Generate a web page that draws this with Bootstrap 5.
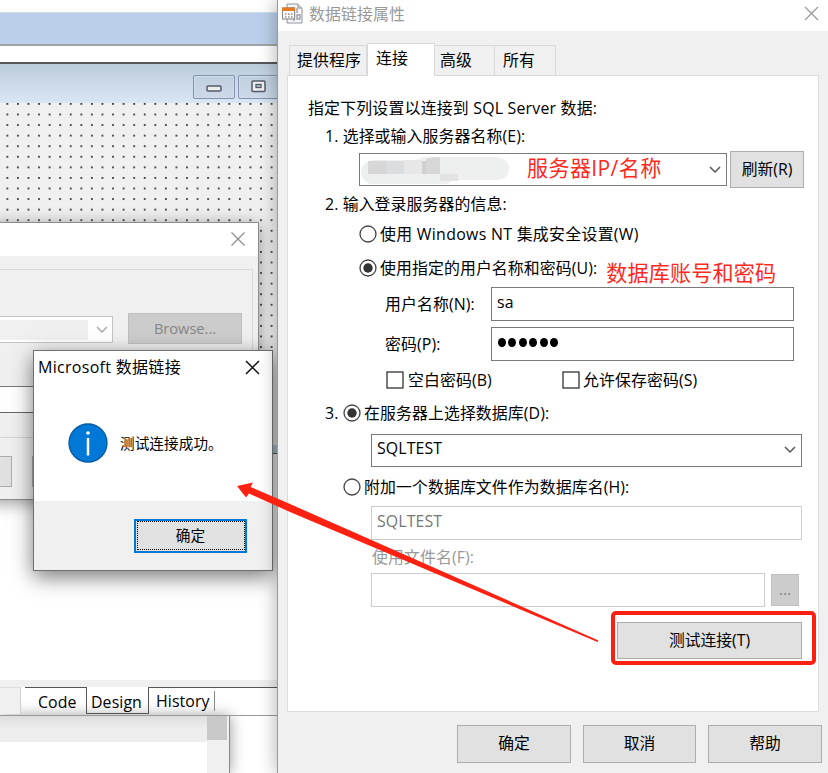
<!DOCTYPE html>
<html lang="zh-CN">
<head>
<meta charset="utf-8">
<meta name="viewport" content="width=device-width, initial-scale=1">
<title>数据链接属性</title>
<link href="https://cdn.jsdelivr.net/npm/bootstrap@5.3.0/dist/css/bootstrap.min.css" rel="stylesheet">
<style>
body{width:828px;height:773px;overflow:hidden;background:#fff;color:#000;font:15.9px/24px "Open Sans","Noto Sans CJK SC",sans-serif;letter-spacing:.09px;white-space:nowrap}
.win{position:absolute;overflow:hidden}
.btn{--bs-btn-padding-x:0;--bs-btn-padding-y:0;--bs-btn-font-size:15.8px;--bs-btn-line-height:20px;--bs-btn-border-radius:0;--bs-btn-bg:#e1e1e1;--bs-btn-color:#000;--bs-btn-border-color:#adadad;flex:none;border-width:1.5px;display:flex;align-items:center;justify-content:center;padding-bottom:2px}
.btn:disabled{--bs-btn-disabled-bg:#ccc;--bs-btn-disabled-color:#868686;--bs-btn-disabled-border-color:#bfbfbf;--bs-btn-disabled-opacity:1}
svg{flex:none;display:block}
/* editor window */
#ide{left:0;top:0;width:278px;height:773px}
.strip-blue{height:34px;margin-top:12px;background:#bad0ea;border-top:1px solid #cfdcec;border-bottom:2px solid #9fa4aa}
.strip-gap{height:16px}
.caption-bar{height:41px;border-top:2px solid #55575b;background:linear-gradient(#bccbda,#d9e6f5)}
.cap-btn{width:42px;height:24px;margin-top:11px;border:1.5px solid #8592b0;border-radius:2px;background:linear-gradient(#c0cfdf,#ccd9e8);box-shadow:inset 0 0 0 1px #cfdcea}
.dots{height:342px;background:#f0f0f0}
.frame-end{height:9px;background:#bccfe4;border-bottom:1.5px solid #4e5661}
.canvas-end{height:226px}
.rail{height:7px;background:#f0f0f0}
.tabs-row{height:29px;border-bottom:1px solid #999}
.tabs-row>div{height:27px}
.tabs-row .stub{width:21px;background:#f0f0f0;border-top:1px solid #ddd;border-right:1px solid #d0d0d0}
.tabs-row .tb{border-top:1.5px solid #555;line-height:29px}
.tabs-row .cur{border:1.5px solid #555;border-top:0}
.tabs-row .edge{width:1px;height:20px;background:#888}
.lower{width:230px;height:57px;border-right:1.5px solid #8a8a8a;box-shadow:0 0 14px #999}
.lower .bar{height:26px;background:linear-gradient(#ddd,#eee 50%)}
.lower .scroller{width:22px;background:#f0f0f0}
.lower .thumb{width:20px;height:24px;background:#c9c9c9}
/* source dialog */
#src{left:-20px;top:222px;width:279px;height:278px;background:#f0f0f0;border:1px solid #8c8c8c;box-shadow:0 3px 16px #0006}
#src .head{height:33px;background:#fff;padding:0 13px 2px 0}
.grp{margin:13px 5px 0 0;height:117px;border:1px solid #d9d9d9;border-bottom:0}
.cmb{border:1.5px solid #7a7a7a;background:#fff}
/* message box */
#msg{left:33px;top:350px;width:240px;height:221px;background:#fff;border:1.5px solid #6f6f6f;box-shadow:0 6px 20px #0008}
#msg .foot{height:69px;background:#f0f0f0}
.focus-btn{width:113px;height:34px;border:2.5px solid #0078d7!important;font-size:14.7px;padding:0}
.focus-btn span{display:flex;align-items:center;justify-content:center;width:108px;height:29px;border:1px dotted #000;padding-bottom:1px}
/* properties dialog */
#prop{left:277px;top:0;width:551px;height:773px;background:#f0f0f0;border-left:1.5px solid #9a9a9a;overflow:visible;box-shadow:-2px 0 16px #0004}
#prop .head{height:31px;background:#fff}
.tab-line{height:44px;padding-left:11px}
.tab-line>div{border:1.5px solid #d9d9d9;height:31px;line-height:28px;margin-bottom:-1px}
.tab-line .sel{height:33px;background:#fff;border-bottom:0;line-height:28px;z-index:1}
.panel{margin-left:9px;width:532px;height:637px;background:#fff;border:1.5px solid #dcdcdc;padding-top:20px}
.ln{display:flex;align-items:center;height:24px}
.fld{height:34px;border:1.5px solid #7a7a7a;background:#fff;padding-left:5px;line-height:29px}
.off{border-color:#ccc;color:#777}
.red{color:#fd2a1d;font-size:21.1px;line-height:26px;letter-spacing:.15px}
.bul i{width:8px;height:9px;border-radius:50%;background:#000}
.marked{position:absolute;left:333px;top:611px;width:205px;height:54px;border:4px solid #fb2112;border-radius:5px}
.over{position:absolute;left:0;top:0}
</style>
<script src="https://cdn.jsdelivr.net/npm/bootstrap@5.3.0/dist/js/bootstrap.bundle.min.js"></script>
</head>
<body class="position-relative">

<section class="win" id="ide">
  <div class="strip-blue"></div>
  <div class="strip-gap"></div>
  <div class="caption-bar d-flex">
    <div class="cap-btn d-flex flex-shrink-0 justify-content-center" style="margin-left:193px">
      <svg width="16" height="21"><rect x="1" y="10" width="14" height="5" rx="1" fill="#eee" stroke="#555a68" stroke-width="1.5"/></svg>
    </div>
    <div class="cap-btn d-flex flex-shrink-0 justify-content-center" style="margin-left:3px">
      <svg width="16" height="21"><rect x="1" y="5" width="13" height="10.500" rx="1" fill="#eee" stroke="#555a68" stroke-width="1.5"/><rect x="5" y="8.500" width="5" height="3" fill="#b7c4d4" stroke="#555a68" stroke-width="1.3"/></svg>
    </div>
  </div>
  <div class="dots">
    <svg width="278" height="342"><defs><pattern id="grid" x="6.400" y="0" width="10.570" height="10.570" patternUnits="userSpaceOnUse"><rect x="0" y="0" width="1.800" height="1.800" fill="#3f372e"/></pattern></defs><rect width="278" height="342" fill="url(#grid)"/></svg>
  </div>
  <div class="frame-end"></div>
  <div class="canvas-end"></div>
  <div class="rail"></div>
  <div class="tabs-row d-flex">
    <div class="stub"></div>
    <div class="ms-1 tb" style="width:61px;padding-left:13px">Code</div>
    <div class="cur" style="width:63px;padding-left:4px;line-height:30px">Design</div>
    <div class="tb flex-fill d-flex align-items-center" style="padding-left:7px"><span>History</span><span class="edge ms-1"></span></div>
  </div>
  <div class="lower d-flex">
    <div class="flex-fill"><div class="bar"></div></div>
    <div class="scroller"><div class="thumb"></div></div>
  </div>
</section>

<section class="win" id="src">
  <div class="head d-flex justify-content-end align-items-center">
    <svg width="14" height="14"><path d="M.5 .5l13 13M13.500 .5l-13 13" stroke="#8c8c8c" stroke-width="1.2"/></svg>
  </div>
  <div class="grp d-flex align-items-start">
    <div class="cmb d-flex align-items-center" style="width:131px;height:27px;margin-top:46px;border-color:#c4c4c4">
      <div style="width:105px;height:20px;background:#f0f0f0"></div>
      <svg class="ms-2" width="12" height="8"><path d="M1 1l5 5 5-5" fill="none" stroke="#aaa" stroke-width="1.5"/></svg>
    </div>
    <button class="btn" disabled style="width:114px;height:31px;margin:43px 0 0 15px;font-size:14.6px">Browse...</button>
  </div>
  <div class="bg-white" style="height:27px;border-top:1px solid #777;border-bottom:1px solid #666"></div>
  <div style="height:25px;border-bottom:1px solid #d4d4d4"></div>
  <div class="d-flex" style="margin-top:18px">
    <div class="btn" style="width:31px;height:31px"></div>
    <div class="btn" style="width:114px;height:31px;margin-left:20px"></div>
  </div>
</section>

<section class="win d-flex flex-column" id="msg">
  <div class="d-flex align-items-center justify-content-between" style="height:32px;padding:0 12px 0 4px;font-size:16px;letter-spacing:.3px">
    <span>Microsoft 数据链接</span>
    <svg width="15" height="15"><path d="M1 1l13 13M14 1L1 14" stroke="#111" stroke-width="1.5"/></svg>
  </div>
  <div class="flex-fill d-flex align-items-center" style="padding:1px 0 0 34px;font-size:14.6px">
    <svg width="40" height="40"><circle cx="20" cy="20" r="19" fill="#0078d7" stroke="#075a9f" stroke-width="1.3"/><path d="M20 15v17.500" stroke="#fff" stroke-width="2.500"/><circle cx="20" cy="10" r="1.800" fill="#fff"/></svg>
    <span style="margin-left:12px">测试连接成功。</span>
  </div>
  <div class="foot d-flex align-items-center justify-content-end" style="padding-right:25px">
    <button class="btn focus-btn"><span>确定</span></button>
  </div>
</section>

<section class="win" id="prop">
  <div class="head d-flex align-items-center" style="padding:0 9px 4px 4px">
    <svg width="21" height="21" viewBox="0 0 21 21"><path d="M5 1h11l4 4v15H5z" fill="#f4f5f7" stroke="#8f9299"/><path d="M16 1v4h4" fill="#ddd" stroke="#8f9299"/><path d="M9 5h3v3H9zM15 5v5M12 11v7M15 12h3v4h-3z" fill="none" stroke="#9a9fab" stroke-width="1.4"/><rect x=".6" y="5" width="12" height="11" fill="#fff" stroke="#7d7d7d"/><path d="M0 4.500h13v3.500H0z" fill="#e27b22"/><path d="M3 11h8M3 14h8" stroke="#888" stroke-width="1.5" stroke-dasharray="1.500 1.500"/></svg>
    <span style="color:#999;margin-left:6px">数据链接属性</span>
    <svg class="ms-auto" width="15" height="15"><path d="M1 1l13 13M14 1L1 14" stroke="#999" stroke-width="1.200"/></svg>
  </div>
  <div class="tab-line d-flex align-items-end">
    <div style="width:78px;padding-left:7px">提供程序</div>
    <div class="sel position-relative" style="width:68px;padding-left:8px">连接</div>
    <div style="width:60px;padding-left:5px;border-left:0">高级</div>
    <div style="width:61px;padding-left:8px;border-left:0">所有</div>
  </div>
  <div class="panel">
    <div class="ln" style="padding-left:20px;letter-spacing:.2px">指定下列设置以连接到 SQL Server 数据:</div>
    <div class="ln" style="margin-top:4px;padding-left:37px">1. 选择或输入服务器名称(E):</div>
    <div class="ln" style="height:37px;margin-top:3px;padding-left:71px">
      <div class="cmb d-flex align-items-center" style="width:368px;height:33px">
        <svg width="152" height="28"><path d="M14 4h41q3 0 7-3h75q12 2 12 12t-12 11H92q-4 6-13 6H14Q1 25 1 16 2 5 14 4z" fill="#eeefef"/><path d="M8 5h18v13H8z" fill="#d7d7d8"/><path d="M26 5h18v13H26z" fill="#dcdddf"/><path d="M44 4h18v14H44z" fill="#e7e7e7"/><path d="M62 5h18v13H62z" fill="#d0d0d0"/><path d="M66 3q4-2 14-2v17H66z" fill="#d7d7d7"/><path d="M80 18h18v7H80z" fill="#e3e3e3"/></svg>
        <span class="red" style="margin:0 0 3px 15px;letter-spacing:.35px">服务器IP/名称</span>
        <svg class="ms-auto" style="margin-right:5px" width="12" height="8"><path d="M1 1l5 5 5-5" fill="none" stroke="#555" stroke-width="1.500"/></svg>
      </div>
      <button class="btn" style="width:74px;height:37px;margin-left:3px">刷新(R)</button>
    </div>
    <div class="ln" style="margin-top:4px;padding-left:37px">2. 输入登录服务器的信息:</div>
    <div class="ln" style="margin-top:6px;padding-left:71px">
      <svg width="18" height="18"><circle cx="9" cy="9" r="8" fill="#fff" stroke="#444" stroke-width="1.3"/></svg><span style="margin-left:3px;letter-spacing:.3px">使用 Windows NT 集成安全设置(W)</span>
    </div>
    <div class="ln" style="margin-top:10px;padding-left:71px">
      <svg width="18" height="18"><circle cx="9" cy="9" r="8" fill="#fff" stroke="#444" stroke-width="1.3"/><circle cx="9" cy="9" r="4.700" fill="#333"/></svg><span style="margin-left:3px">使用指定的用户名称和密码(U):</span><span class="red" style="margin:10px 0 0 9px">数据库账号和密码</span>
    </div>
    <div class="ln" style="height:34px;margin-top:7px;padding-left:97px"><span style="width:106px">用户名称(N):</span><div class="fld" style="width:303px">sa</div></div>
    <div class="ln" style="height:34px;margin-top:6px;padding-left:97px"><span style="width:106px">密码(P):</span>
      <div class="fld bul d-flex" style="width:303px;padding:10px 0 0 5.5px;gap:2.6px"><i></i><i></i><i></i><i></i><i></i><i></i></div></div>
    <div class="ln" style="margin-top:7px;padding-left:98px">
      <svg width="18" height="18"><rect x="1" y="1" width="16" height="16" fill="#fff" stroke="#333" stroke-width="1.300"/></svg><span style="margin-left:4px;width:154px">空白密码(B)</span>
      <svg width="18" height="18"><rect x="1" y="1" width="16" height="16" fill="#fff" stroke="#333" stroke-width="1.300"/></svg><span style="margin-left:3px">允许保存密码(S)</span>
    </div>
    <div class="ln" style="margin-top:9px;padding-left:37px"><span style="width:18px">3.</span>
      <svg width="18" height="18"><circle cx="9" cy="9" r="8" fill="#fff" stroke="#444" stroke-width="1.3"/><circle cx="9" cy="9" r="4.700" fill="#333"/></svg><span style="margin-left:3px">在服务器上选择数据库(D):</span>
    </div>
    <div class="ln" style="height:34px;margin-top:8px;padding-left:83px"><div class="fld d-flex align-items-center" style="width:431px;height:33px"><span class="pb-1">SQLTEST</span>
      <svg class="ms-auto" style="margin-right:5px" width="12" height="8"><path d="M1 1l5 5 5-5" fill="none" stroke="#555" stroke-width="1.500"/></svg></div></div>
    <div class="ln" style="margin-top:8px;padding-left:55px">
      <svg width="18" height="18"><circle cx="9" cy="9" r="8" fill="#fff" stroke="#444" stroke-width="1.3"/></svg><span style="margin-left:3px">附加一个数据库文件作为数据库名(H):</span>
    </div>
    <div class="ln" style="height:34px;margin-top:7px;padding-left:83px"><div class="fld off" style="width:431px">SQLTEST</div></div>
    <div class="ln" style="margin-top:5px;padding-left:84px;color:#999">使用文件名(F):</div>
    <div class="ln" style="height:34px;margin-top:4px;padding-left:83px"><div class="fld off" style="width:394px"></div><button class="btn" disabled style="width:28px;height:32px;margin-left:6px">...</button></div>
    <div class="ln" style="height:37px;margin-top:15px;padding-left:329px"><button class="btn" style="width:185px;height:37px">测试连接(T)</button></div>
  </div>
  <div class="d-flex" style="padding:13px 0 0 179px;gap:12px">
    <button class="btn" style="width:114px;height:38px">确定</button>
    <button class="btn" style="width:113px;height:38px">取消</button>
    <button class="btn" style="width:114px;height:38px">帮助</button>
  </div>
  <div class="marked"></div>
</section>

<svg class="over" width="828" height="773"><path d="M237 486l16-3.500-2.500 4.500L290 504 598.500 640.500l-1 1.500L290 512l-41-18.500-3 4z" fill="#fd2112"/></svg>
</body>
</html>
